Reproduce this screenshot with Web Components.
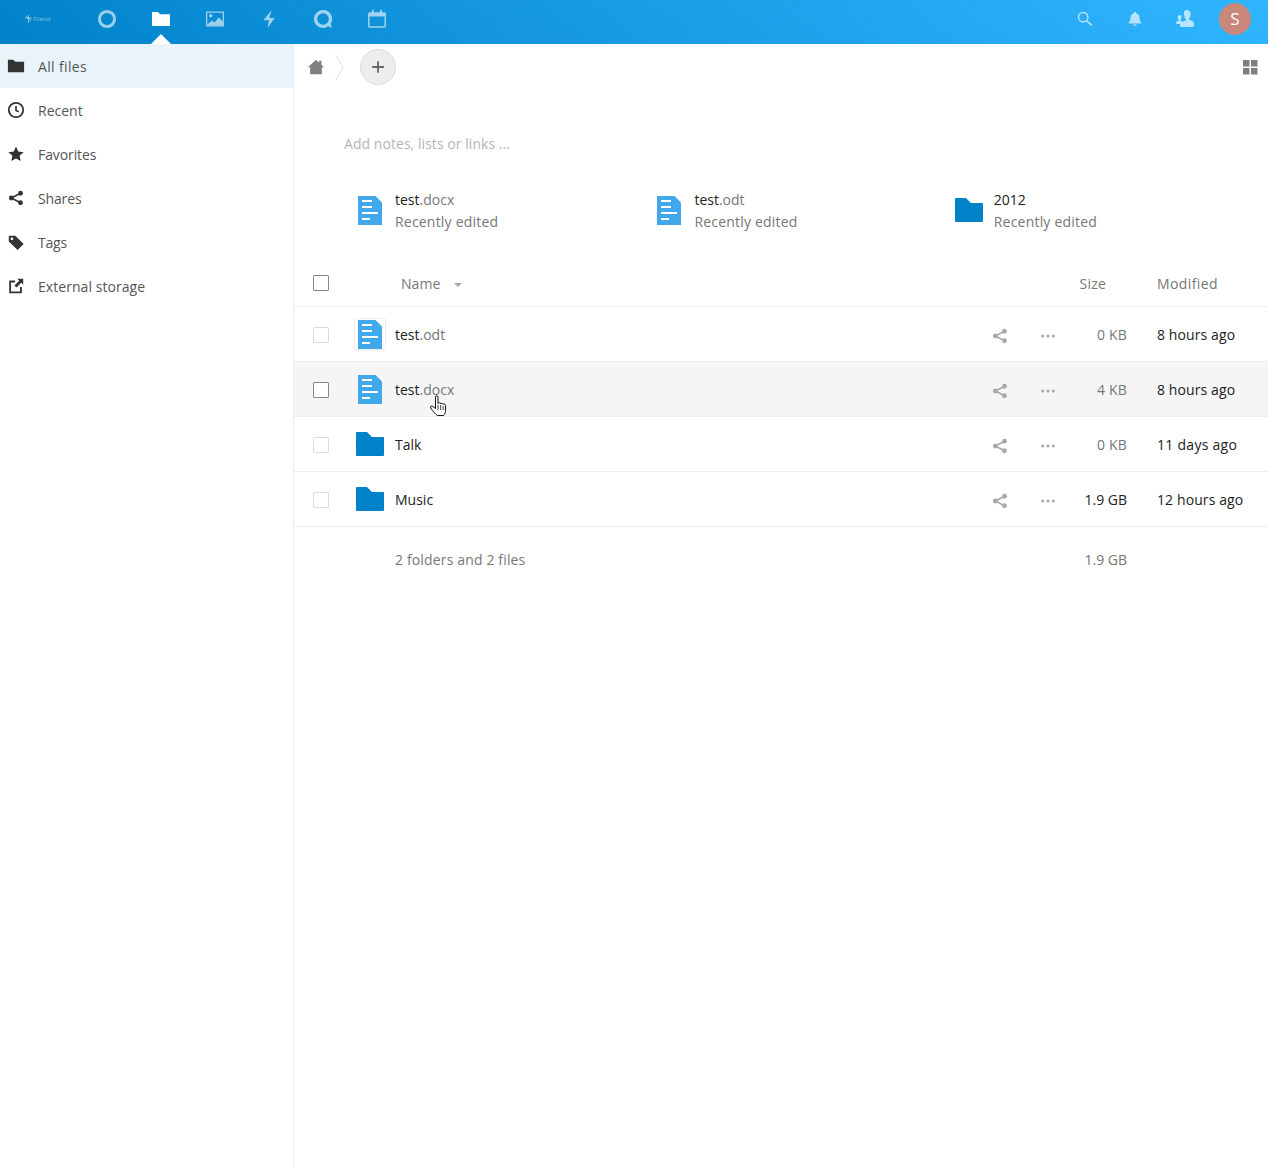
<!DOCTYPE html>
<html><head><meta charset="utf-8"><style>
html,body{margin:0;height:100%;background:#fff}
body{font:14px/20px "Open Sans",sans-serif;color:#222;overflow:hidden}
</style></head><body>
<app-shell>
<top-bar slot="top"></top-bar>
<side-nav slot="side">
<nav-item icon="folder" active style="letter-spacing:.35px">All files</nav-item>
<nav-item icon="clock">Recent</nav-item>
<nav-item icon="star" style="letter-spacing:-.1px">Favorites</nav-item>
<nav-item icon="share" style="letter-spacing:-.15px">Shares</nav-item>
<nav-item icon="tag" style="letter-spacing:-.2px">Tags</nav-item>
<nav-item icon="external" style="letter-spacing:.05px">External storage</nav-item>
</side-nav>
<files-view></files-view>
</app-shell>
<script>
const ICONS={
folder:'<path fill="currentColor" d="M1 3h6l2.200 2.200H19V17H1z"/>',
ring:'<circle cx="10" cy="10" r="7.600" fill="none" stroke="currentColor" stroke-width="3"/>',
image:'<path fill="currentColor" fill-rule="evenodd" d="M1 2.500h18v15H1zM2.300 3.800v12.400h15.400V3.800z"/><circle cx="5.700" cy="6.800" r="1.700" fill="currentColor"/><path fill="currentColor" d="M2.300 15.500l4.700-4 2.500 1.900 4.300-4.800 3.900 4v3.600H2.300z"/>',
bolt:'<path fill="currentColor" d="M12.800 1L4.300 11.300h5.600L8.600 19l7.100-10.100h-5.500z"/>',
talk:'<path fill="currentColor" fill-rule="evenodd" d="M10 1a9 9 0 1 0 5.200 16.300L19 19l-1.200-4.300A9 9 0 0 0 10 1zm0 3.200a5.800 5.800 0 1 1 0 11.600 5.800 5.800 0 0 1 0-11.600z"/>',
calendar:'<path fill="currentColor" fill-rule="evenodd" d="M5 .8h1.800v2.400h6.400V.8H15v2.400h2.200A1.800 1.800 0 0 1 19 5v12a1.800 1.800 0 0 1-1.800 1.800H2.800A1.800 1.800 0 0 1 1 17V5a1.800 1.800 0 0 1 1.800-1.800H5zM2.500 7.500V17c0 .2.100.3.300.3h14.400c.2 0 .3-.1.300-.3V7.500z"/>',
search:'<circle cx="8" cy="8" r="5.200" fill="none" stroke="currentColor" stroke-width="1.700"/><path stroke="currentColor" stroke-width="2" d="M12 12l5.500 5"/>',
bell:'<path fill="currentColor" d="M10 2.200c.9 0 1.500.6 1.500 1.300 2.500.7 3.500 2.600 3.500 5.200 0 2.500.8 4 2 5v1.200H3V13.700c1.200-1 2-2.500 2-5 0-2.600 1-4.500 3.500-5.200 0-.7.600-1.300 1.500-1.300zM8 16.200h4a2 1.600 0 0 1-4 0z"/>',
contacts:'<path fill="currentColor" d="M12 1c2.300 0 3.700 1.800 3.700 4 0 1.700-.6 3.300-1.600 4.200-.3.500-.2 1.300.3 1.600 1.900.9 4.600 1.300 4.600 3.700v2.100c0 .9-.8 1.400-2 1.400H7.500c-1.500 0-2.500-.5-2.500-1.500v-1.500H3c-1.200 0-2-.4-2-1.100 0-1.300 1-1.700 2.500-2.200.4-.3.300-.8 0-1.100-.6-.6-.9-1.400-.9-2.400 0-1.300.8-2.200 2-2.200s2 .9 2 2.200c0 1-.3 1.800-.8 2.400-.3.300-.3.800.1 1.100.6.300 1.500.6 1.900 1.100 1.100-.6 1.900-.9 2.700-1.200.6-.3.700-1.100.3-1.700-1-1-1.500-2.500-1.500-4C8.300 2.800 9.700 1 12 1z"/>',
home:'<path fill="currentColor" d="M10 2l3.500 3.200V3h2.500v4.400l3 2.900h-2.500V18h-13v-7.700H1z"/>',
grid:'<path fill="currentColor" d="M3 3h6.500v6.500H3zM11 3h6.500v6.500H11zM3 11h6.500v6.500H3zM11 11h6.500v6.500H11z"/>',
clock:'<circle cx="10" cy="10" r="8" fill="none" stroke="currentColor" stroke-width="2"/><path fill="none" stroke="currentColor" stroke-width="1.800" d="M10 5.500V10.500l3 1.500"/>',
star:'<path fill="currentColor" d="M10 1.800l2.500 5.500 6 .7-4.500 4 1.300 5.900L10 15l-5.300 2.900L6 12 1.500 8l6-.7z"/>',
share:'<circle cx="15" cy="4.700" r="2.700" fill="currentColor"/><circle cx="15" cy="15.300" r="2.700" fill="currentColor"/><circle cx="4.800" cy="10" r="2.700" fill="currentColor"/><path fill="none" stroke="currentColor" stroke-width="1.800" d="M15 4.700L4.800 10 15 15.300"/>',
tag:'<path fill="currentColor" fill-rule="evenodd" d="M2 3h7.200L18.500 12.300 11.800 19 2 9.500zM5.500 5a1.500 1.500 0 1 0 0 3 1.500 1.500 0 0 0 0-3z"/>',
external:'<path fill="none" stroke="currentColor" stroke-width="2" d="M9 5H3.500v12h12v-6"/><path fill="currentColor" d="M11.500 2H18v6.500l-2.200-2.200-5.300 5.300-2.200-2.200 5.300-5.300z"/>',
dots:'<circle cx="4" cy="10" r="1.700" fill="currentColor"/><circle cx="10" cy="10" r="1.700" fill="currentColor"/><circle cx="16" cy="10" r="1.700" fill="currentColor"/>',
plus:'<path stroke="currentColor" stroke-width="2" d="M10 3.500v13M3.500 10h13"/>'
};
const def=(name,html,extra)=>{
  const t=document.createElement('template');t.innerHTML=html;
  customElements.define(name,class extends HTMLElement{
    connectedCallback(){
      if(!this.shadowRoot)this.attachShadow({mode:'open'}).appendChild(t.content.cloneNode(true));
      if(extra)extra(this,this.shadowRoot);
    }
  });
};
customElements.define('x-icon',class extends HTMLElement{
  connectedCallback(){
    const s=this.getAttribute('size')||20;
    const n=this.getAttribute('name')||(this.getRootNode().host&&this.getRootNode().host.getAttribute('icon'));
    this.attachShadow({mode:'open'}).innerHTML=`<style>:host{display:inline-flex;flex:none;line-height:0}</style><svg width="${s}" height="${s}" viewBox="0 0 20 20">${ICONS[n]||''}</svg>`;
  }
});
customElements.define('doc-icon',class extends HTMLElement{
  connectedCallback(){
    this.attachShadow({mode:'open'}).innerHTML=`<style>:host{display:inline-flex;flex:none;line-height:0}</style><svg width="24" height="29" viewBox="0 0 24 29"><path fill="#41a9eb" d="M0 0h17.500L24 6.500V29H0z"/><path stroke="#fff" stroke-width="2" d="M4 5h10M4 11h10M4 17h16M4 23h8"/></svg>`;
  }
});
customElements.define('folder-icon',class extends HTMLElement{
  connectedCallback(){
    this.attachShadow({mode:'open'}).innerHTML=`<style>:host{display:inline-flex;flex:none;line-height:0}</style><svg width="28" height="24" viewBox="0 0 28 24"><path fill="#0082c9" d="M0 1a1 1 0 0 1 1-1h10l5 5h11a1 1 0 0 1 1 1v17a1 1 0 0 1-1 1H1a1 1 0 0 1-1-1z"/></svg>`;
  }
});
def('app-shell',`<style>
:host{display:grid;grid-template:44px 1fr/294px 1fr;height:100vh;width:1268px}
.t{grid-column:1/3;display:block}
.s{display:block;border-right:1px solid #ededed}
.m{display:block;min-width:0}
</style><div class="t"><slot name="top"></slot></div><div class="s"><slot name="side"></slot></div><div class="m"><slot></slot></div>`);
def('top-bar',`<style>
:host{display:flex;height:44px;box-sizing:border-box;padding-bottom:6px;align-items:center;background:linear-gradient(40deg,#0082c9 0%,#30b6ff 100%);color:#fff}
.logo{width:80px;box-sizing:border-box;padding-left:25px;display:flex;align-items:center;gap:1px;color:rgba(255,255,255,.5);font-size:6px;line-height:10px}
.app{width:54px;height:38px;display:flex;align-items:center;justify-content:center;color:rgba(255,255,255,.6);position:relative}
.app.on{color:#fff}
.app.on::after{content:"";position:absolute;left:17px;bottom:-6px;border:10px solid transparent;border-top:0;border-bottom-color:#fff}
.sp{flex:1}
.r{width:50px;height:38px;display:flex;align-items:center;justify-content:center;color:rgba(255,255,255,.65)}
.av{width:32px;height:32px;border-radius:50%;background:#c98879;color:#fff;font-size:17px;line-height:32px;text-align:center;margin:0 17px 0 9px}
</style>
<div class="logo"><svg width="7" height="8" viewBox="0 0 7 8"><path stroke="currentColor" d="M0 3h7M3.500 0v8M1 1l5 5"/></svg><span>Filerot</span></div>
<div class="app"><x-icon name="ring"></x-icon></div>
<div class="app on"><x-icon name="folder"></x-icon></div>
<div class="app"><x-icon name="image"></x-icon></div>
<div class="app"><x-icon name="bolt"></x-icon></div>
<div class="app"><x-icon name="talk"></x-icon></div>
<div class="app"><x-icon name="calendar"></x-icon></div>
<div class="sp"></div>
<div class="r"><x-icon name="search" size="18"></x-icon></div>
<div class="r"><x-icon name="bell" size="18"></x-icon></div>
<div class="r"><x-icon name="contacts"></x-icon></div>
<div class="av">S</div>`);
def('side-nav',`<style>:host{display:block}</style><slot></slot>`);
def('nav-item',`<style>
:host{display:flex;align-items:center;height:44px;color:#555;padding-left:7px;gap:13px}
:host([active]){background:#e8f3fa}
x-icon{color:#333}
span{position:relative;top:1px}
</style><x-icon size="18"></x-icon><span><slot></slot></span>`);
def('recent-item',`<style>
:host{display:flex;width:299.400px;height:44px;align-items:center;box-sizing:border-box;padding-left:14px}
.i{width:24px;display:flex;justify-content:center;margin:0 13px 2px 0;flex:none}
.f{display:block;color:#222;line-height:22px}
.f span,.d{color:#777}
.d{display:block;line-height:22px;letter-spacing:.2px}
</style><div class="i"><slot name="icon"></slot></div><div><span class="f"><slot name="base"></slot><span><slot name="ext"></slot></span></span><span class="d">Recently edited</span></div>`);
def('file-row',`<style>
:host{display:flex;align-items:center;height:54px;border-bottom:1px solid #ededed;color:#222}
:host([hover]){background:#f5f5f5}
.c{width:14px;height:14px;border:1px solid #dbdbdb;border-radius:1px;margin:2px 0 0 19px;flex:none;background:#fff}
:host([hover]) .c{border-color:#878787}
.i{display:flex;justify-content:center;flex:none;box-sizing:border-box;width:32px;height:32px;align-items:center;margin-left:25px;margin-right:9px;border-radius:3px}
:host([framed]) .i{box-shadow:inset 0 0 0 1px #ededed}
.n{flex:1;min-width:0;padding-top:2px}
.n span{color:#777}
.a{display:flex;width:20px;justify-content:center;color:#a9a9a9;padding-top:4px}
.sh{margin-right:28px}
.sz{width:69px;text-align:right;color:var(--sz,#777);margin-right:30px;letter-spacing:var(--szl,.2px);padding-top:2px}
.m{width:111px;color:#222;letter-spacing:var(--ls,.1px);padding-top:2px}
</style><div class="c"></div><div class="i"><slot name="icon"></slot></div>
<div class="n"><slot name="base"></slot><span><slot name="ext"></slot></span></div>
<div class="a sh"><x-icon name="share" size="18"></x-icon></div><div class="a"><x-icon name="dots" size="18"></x-icon></div>
<div class="sz"><slot name="size"></slot></div><div class="m"><slot name="mod"></slot></div>`);
def('files-view',`<style>
:host{display:block;position:relative}
.bar{display:flex;align-items:center;height:46px}
.home{margin-left:13px;color:#7f7f7f;display:flex}
.chev{margin-left:10px;display:flex}
.plus{width:36px;height:36px;box-sizing:border-box;border-radius:50%;background:#ededed;border:1px solid #dbdbdb;color:#666;display:flex;align-items:center;justify-content:center;margin-left:16px}
.grid{margin-left:auto;margin-right:8px;color:#7f7f7f;display:flex}
.notes{color:#b5b5b5;padding-left:50px;margin-top:44px;height:20px;letter-spacing:.05px}
.recent{display:flex;margin-top:35px;padding-left:50px}
.head{display:flex;align-items:center;height:44px;margin-top:29px;border-bottom:1px solid #ededed;color:#777}
.cb{width:14px;height:14px;border:1px solid #878787;border-radius:1px;margin:0 0 2px 19px;background:#fff;flex:none}
.nm{margin-left:72px;display:flex;align-items:center;gap:14px;letter-spacing:.05px}
.tri{width:0;height:0;border:4px solid transparent;border-top:4px solid #a9a9a9;border-bottom:0;margin-top:2px}
.s{margin-left:auto;margin-right:51px;letter-spacing:.2px}
.mo{width:111px;letter-spacing:.4px}
.sum{display:flex;height:66px;align-items:center;color:#777;padding-left:101px}
.sum .l{letter-spacing:.15px}
.sum .z{margin-left:auto;width:79px;text-align:right;margin-right:141px}
.hand{position:absolute;left:136px;top:351px;line-height:0}
</style>
<div class="bar">
<div class="home"><x-icon name="home" size="18"></x-icon></div>
<div class="chev"><svg width="9" height="27" viewBox="0 0 9 27"><path fill="none" stroke="#dedede" d="M1 1l7 12.500L1 26"/></svg></div>
<div class="plus"><x-icon name="plus" size="18"></x-icon></div>
<div class="grid"><x-icon name="grid" size="20"></x-icon></div>
</div>
<div class="notes">Add notes, lists or links ...</div>
<div class="recent">
<recent-item><doc-icon slot="icon"></doc-icon><span slot="base">test</span><span slot="ext">.docx</span></recent-item>
<recent-item><doc-icon slot="icon"></doc-icon><span slot="base">test</span><span slot="ext">.odt</span></recent-item>
<recent-item><folder-icon slot="icon"></folder-icon><span slot="base">2012</span></recent-item>
</div>
<div class="head"><div class="cb"></div><div class="nm">Name<span class="tri"></span></div><div class="s">Size</div><div class="mo">Modified</div></div>
<file-row framed><doc-icon slot="icon"></doc-icon><span slot="base">test</span><span slot="ext">.odt</span><span slot="size">0 KB</span><span slot="mod">8 hours ago</span></file-row>
<file-row hover><doc-icon slot="icon"></doc-icon><span slot="base">test</span><span slot="ext">.docx</span><span slot="size">4 KB</span><span slot="mod">8 hours ago</span></file-row>
<file-row style="--ls:.28px"><folder-icon slot="icon"></folder-icon><span slot="base">Talk</span><span slot="size">0 KB</span><span slot="mod">11 days ago</span></file-row>
<file-row style="--sz:#222;--szl:0"><folder-icon slot="icon"></folder-icon><span slot="base">Music</span><span slot="size">1.9 GB</span><span slot="mod">12 hours ago</span></file-row>
<div class="sum"><span class="l">2 folders and 2 files</span><span class="z">1.9 GB</span></div>
<div class="hand"><svg width="18" height="22" viewBox="0 0 18 22"><path fill="#fff" stroke="#111" stroke-width="1" stroke-linejoin="round" d="M5.500 2c0-1.700 2.500-1.700 2.500 0v6.500c.3-1 2.500-1 2.700.4.300-1 2.300-.8 2.500.6.400-.8 2.300-.6 2.400 1V15c0 2.500-1 4-2 5.500H7.500C5.500 19.500 3 16.500.8 13c-.8-1.500.8-2.600 2-1.600l2.700 2.100z"/><path stroke="#111" stroke-width=".8" d="M8 10v5M10.700 10v5M13.200 11v4"/></svg></div>`);
</script>
</body></html>
